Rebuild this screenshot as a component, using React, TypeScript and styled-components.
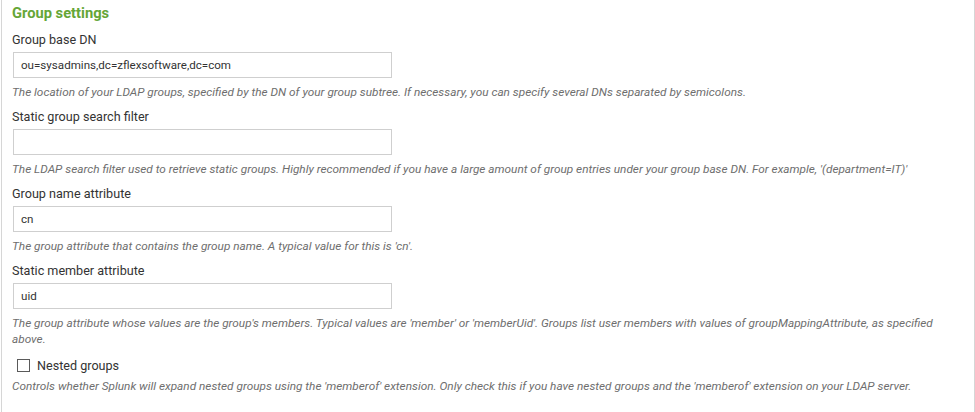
import React, { useState } from 'react';
import styled, { createGlobalStyle } from 'styled-components';

const GlobalStyle = createGlobalStyle`
  html, body {
    margin: 0;
    padding: 0;
    background: #ffffff;
  }
  body {
    font-family: Roboto, "Liberation Sans", Arial, sans-serif;
    color: #333333;
  }
`;

const Panel = styled.div`
  box-sizing: border-box;
  width: 974px;
  height: 412px;
  margin-left: 1px;
  padding: 3px 20px 0 10px;
  border-left: 1px solid #d6d6d6;
  border-right: 1px solid #d6d6d6;
  background: #ffffff;
`;

const Title = styled.h2`
  margin: 0 0 8px 0;
  font-size: 14.7px;
  line-height: 20px;
  font-weight: 700;
  color: #65a637;
`;

const Field = styled.div`
  display: flex;
  flex-direction: column;
  margin-bottom: 8px;
`;

const Label = styled.label`
  font-size: 12.6px;
  line-height: 18px;
  color: #333333;
  margin-bottom: 3px;
`;

const TextInput = styled.input`
  box-sizing: border-box;
  width: 379px;
  height: 26px;
  margin: 0 0 0 1px;
  padding: 0 7px;
  border: 1px solid #cfcfcf;
  border-radius: 0;
  background: #ffffff;
  font-family: Roboto, "Liberation Sans", Arial, sans-serif;
  font-size: 11.6px;
  color: #333333;
  outline: none;
`;

const Help = styled.p<{ $tight?: boolean }>`
  margin: ${p => (p.$tight ? '3px' : '6px')} 0 0 0;
  font-size: 11.8px;
  line-height: 16px;
  font-style: italic;
  color: #6e6e6e;
`;

const CheckRow = styled.label`
  display: flex;
  align-items: center;
  height: 20px;
  margin-top: 5px;
  padding-left: 5px;
  font-size: 12.6px;
  color: #333333;
  cursor: pointer;
`;

const Box = styled.input`
  appearance: none;
  box-sizing: border-box;
  width: 13px;
  height: 13px;
  margin: 0 7px 0 0;
  border: 1px solid #5a5a5a;
  background: #ffffff;
  &:checked {
    background: #65a637;
  }
`;

type FieldDef = {
  label: string;
  value: string;
  help: string;
};

const fields: FieldDef[] = [
  {
    label: 'Group base DN',
    value: 'ou=sysadmins,dc=zflexsoftware,dc=com',
    help: 'The location of your LDAP groups, specified by the DN of your group subtree. If necessary, you can specify several DNs separated by semicolons.',
  },
  {
    label: 'Static group search filter',
    value: '',
    help: "The LDAP search filter used to retrieve static groups. Highly recommended if you have a large amount of group entries under your group base DN. For example, '(department=IT)'",
  },
  {
    label: 'Group name attribute',
    value: 'cn',
    help: "The group attribute that contains the group name. A typical value for this is 'cn'.",
  },
  {
    label: 'Static member attribute',
    value: 'uid',
    help: "The group attribute whose values are the group's members. Typical values are 'member' or 'memberUid'. Groups list user members with values of groupMappingAttribute, as specified above.",
  },
];

const App: React.FC = () => {
  const [values, setValues] = useState<string[]>(fields.map(f => f.value));
  const [nested, setNested] = useState<boolean>(false);

  return (
    <>
      <GlobalStyle />
      <Panel>
        <Title>Group settings</Title>
        {fields.map((f, i) => (
          <Field key={f.label}>
            <Label>{f.label}</Label>
            <TextInput
              value={values[i]}
              onChange={e => {
                const next = [...values];
                next[i] = e.target.value;
                setValues(next);
              }}
            />
            <Help>{f.help}</Help>
          </Field>
        ))}
        <CheckRow>
          <Box type="checkbox" checked={nested} onChange={() => setNested(!nested)} />
          Nested groups
        </CheckRow>
        <Help $tight>
          Controls whether Splunk will expand nested groups using the 'memberof' extension. Only check this if you have nested groups and the 'memberof' extension on your LDAP server.
        </Help>
      </Panel>
    </>
  );
};

export default App;
